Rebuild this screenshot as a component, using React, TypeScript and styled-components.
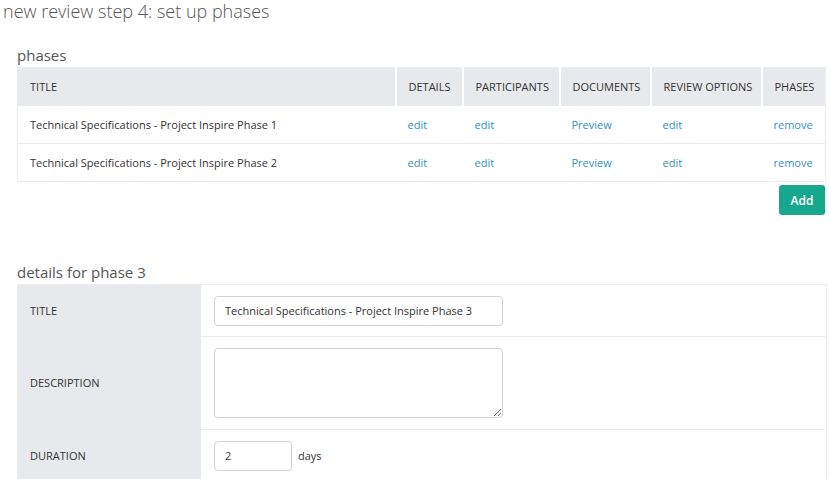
import React from "react";
import styled, { createGlobalStyle } from "styled-components";

const GlobalStyle = createGlobalStyle`
  html, body {
    margin: 0;
    padding: 0;
    background: #ffffff;
    font-family: "Open Sans", "Noto Sans", sans-serif;
    color: #333;
  }
`;

const Page = styled.div`
  width: 829px;
  height: 479px;
  overflow: hidden;
  box-sizing: border-box;
  padding: 0 4px 0 3px;
`;

const PageTitle = styled.h1`
  margin: 0;
  font-size: 18px;
  font-weight: 300;
  color: #555;
  line-height: 23px;
`;

const Section = styled.section<{ top: number }>`
  margin: ${(p) => p.top}px 0 0 14px;
`;

const SectionTitle = styled.h2`
  margin: 0 0 2px;
  font-size: 15px;
  font-weight: 400;
  color: #555;
  line-height: 20px;
`;

const Table = styled.table`
  width: 808px;
  border-collapse: collapse;
  table-layout: fixed;
  border: 1px solid #ececec;
  font-size: 11px;
`;

const HeadCell = styled.th<{ w: number; last?: boolean }>`
  box-sizing: border-box;
  width: ${(p) => p.w}px;
  height: 38px;
  padding: 0 0 0 12px;
  background: #e7e9ec;
  text-align: left;
  font-weight: 400;
  text-transform: uppercase;
  color: #333;
  border-right: ${(p) => (p.last ? "none" : "2px solid #fff")};
  white-space: nowrap;
`;

const Row = styled.tr`
  border-top: 1px solid #ececec;
`;

const Cell = styled.td`
  height: 37px;
  padding: 0 0 0 12px;
  color: #333;
  white-space: nowrap;
`;

const Link = styled.a`
  color: #2f93bf;
  text-decoration: none;
  cursor: pointer;
`;

const Actions = styled.div`
  display: flex;
  justify-content: flex-end;
  width: 808px;
  padding-top: 3px;
`;

const AddButton = styled.button`
  width: 46px;
  height: 30px;
  border: none;
  border-radius: 3px;
  background: #17a78b;
  color: #fff;
  font-family: inherit;
  font-size: 12px;
  font-weight: 600;
  cursor: pointer;
`;

const Form = styled.div`
  width: 808px;
  display: grid;
  grid-template-columns: 183px 1fr;
  border: 1px solid #ececec;
  border-bottom: none;
  font-size: 11px;
`;

const Label = styled.div<{ h: number }>`
  height: ${(p) => p.h}px;
  display: flex;
  align-items: center;
  padding-left: 12px;
  background: #e7e9ec;
  color: #333;
  text-transform: uppercase;
`;

const Field = styled.div<{ h: number; first?: boolean }>`
  height: ${(p) => p.h}px;
  display: flex;
  align-items: center;
  gap: 6px;
  padding-left: 13px;
  border-top: ${(p) => (p.first ? "none" : "1px solid #ececec")};
  box-sizing: border-box;
`;

const TextInput = styled.input<{ w: number }>`
  width: ${(p) => p.w}px;
  height: 30px;
  box-sizing: border-box;
  border: 1px solid #cfd4d8;
  border-radius: 4px;
  padding: 0 10px;
  font-family: inherit;
  font-size: 11px;
  color: #333;
  outline: none;
`;

const TextArea = styled.textarea`
  width: 289px;
  height: 70px;
  box-sizing: border-box;
  border: 1px solid #cfd4d8;
  border-radius: 4px;
  padding: 6px 10px;
  font-family: inherit;
  font-size: 11px;
  outline: none;
`;

const Unit = styled.span`
  color: #333;
`;

const phases = [
  "Technical Specifications - Project Inspire Phase 1",
  "Technical Specifications - Project Inspire Phase 2",
];

export default function App() {
  return (
    <>
      <GlobalStyle />
      <Page>
        <PageTitle>new review step 4: set up phases</PageTitle>

        <Section top={22}>
          <SectionTitle>phases</SectionTitle>
          <Table>
            <thead>
              <tr>
                <HeadCell w={378}>Title</HeadCell>
                <HeadCell w={67}>Details</HeadCell>
                <HeadCell w={97}>Participants</HeadCell>
                <HeadCell w={91}>Documents</HeadCell>
                <HeadCell w={111}>Review options</HeadCell>
                <HeadCell w={64} last>Phases</HeadCell>
              </tr>
            </thead>
            <tbody>
              {phases.map((title) => (
                <Row key={title}>
                  <Cell>{title}</Cell>
                  <Cell><Link>edit</Link></Cell>
                  <Cell><Link>edit</Link></Cell>
                  <Cell><Link>Preview</Link></Cell>
                  <Cell><Link>edit</Link></Cell>
                  <Cell><Link>remove</Link></Cell>
                </Row>
              ))}
            </tbody>
          </Table>
          <Actions>
            <AddButton>Add</AddButton>
          </Actions>
        </Section>

        <Section top={47}>
          <SectionTitle>details for phase 3</SectionTitle>
          <Form>
            <Label h={51}>Title</Label>
            <Field h={51} first>
              <TextInput w={289} defaultValue="Technical Specifications - Project Inspire Phase 3" />
            </Field>
            <Label h={93}>Description</Label>
            <Field h={93}>
              <TextArea />
            </Field>
            <Label h={52}>Duration</Label>
            <Field h={52}>
              <TextInput w={78} defaultValue="2" />
              <Unit>days</Unit>
            </Field>
          </Form>
        </Section>
      </Page>
    </>
  );
}
